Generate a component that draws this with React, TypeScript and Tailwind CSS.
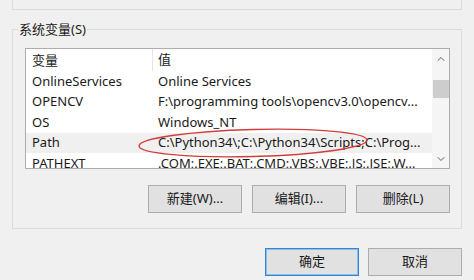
import { ChevronUp, ChevronDown } from "lucide-react";

const rows = [
  { name: "OnlineServices", value: "Online Services" },
  { name: "OPENCV", value: "F:\\programming tools\\opencv3.0\\opencv..." },
  { name: "OS", value: "Windows_NT" },
  { name: "Path", value: "C:\\Python34\\;C:\\Python34\\Scripts;C:\\Prog...", selected: true },
  { name: "PATHEXT", value: ".COM;.EXE;.BAT;.CMD;.VBS;.VBE;.JS;.JSE;.W..." },
];

const font = "font-['Segoe_UI','Noto_Sans','Noto_Sans_CJK_SC',sans-serif]";

function Button({ label, primary }: { label: string; primary?: boolean }) {
  return (
    <button
      type="button"
      className={
        "flex h-[28px] w-[94px] items-center justify-center bg-[#e1e1e1] text-[13px] text-[#1a1a1a] " +
        (primary ? "border border-[#2f86d8] shadow-[inset_0_0_0_1px_#8dbde9]" : "border border-[#adadad]")
      }
    >
      {label}
    </button>
  );
}

export default function App() {
  return (
    <div className={`relative h-[280px] w-[474px] overflow-hidden bg-[#f0f0f0] ${font}`}>
      {/* bottom edge of the group above */}
      <div className="ml-[12px] h-[10px] w-[450px] border-x border-b border-[#dcdcdc]" />

      <div className="relative ml-[12px] mt-[19px] w-[450px] border border-[#dcdcdc] pb-[15px] pl-[12px] pr-[11px] pt-[18px]">
        <span className="absolute -top-[11px] left-[5px] bg-[#f0f0f0] px-[1px] text-[13px] leading-[20px] text-[#1a1a1a]">
          系统变量(S)
        </span>

        <div className="relative flex h-[121px] w-[425px] border border-[#adadad] bg-white">
          <div className="flex-1 overflow-hidden text-[13px] text-[#1a1a1a]">
            <div className="flex h-[22px] items-center">
              <div className="w-[127px] border-r border-[#e5e5e5] pl-[6px] leading-[22px]">变量</div>
              <div className="pl-[5px]">值</div>
            </div>
            {rows.map((r) => (
              <div
                key={r.name}
                className={"flex h-[20.5px] items-center whitespace-nowrap " + (r.selected ? "bg-[#f0f0f0]" : "")}
              >
                <div className="w-[127px] pl-[6px]">{r.name}</div>
                <div className="pl-[5px]">{r.value}</div>
              </div>
            ))}
          </div>
          <div className="flex w-[17px] flex-col items-center bg-[#f5f5f5]">
            <ChevronUp className="mt-[4px] h-[12px] w-[12px] text-[#606060]" strokeWidth={2} />
            <div className="mt-[15px] h-[18px] w-[16px] bg-[#cdcdcd]" />
            <div className="flex-1" />
            <ChevronDown className="mb-[3px] h-[12px] w-[12px] text-[#606060]" strokeWidth={2} />
          </div>

          <svg className="pointer-events-none absolute left-[110px] top-[77px]" width="236" height="34" viewBox="0 0 236 34">
            <ellipse cx="117" cy="17" rx="114" ry="13.5" fill="none" stroke="#d33c3c" strokeWidth="1.4" transform="rotate(-1.5 117 17)" />
          </svg>
        </div>

        <div className="mt-[16px] flex justify-end gap-[10px]">
          <Button label="新建(W)..." />
          <Button label="编辑(I)..." />
          <Button label="删除(L)" />
        </div>
      </div>

      <div className="mr-[12px] mt-[19px] flex justify-end gap-[9px]">
        <Button label="确定" primary />
        <Button label="取消" />
      </div>
    </div>
  );
}
